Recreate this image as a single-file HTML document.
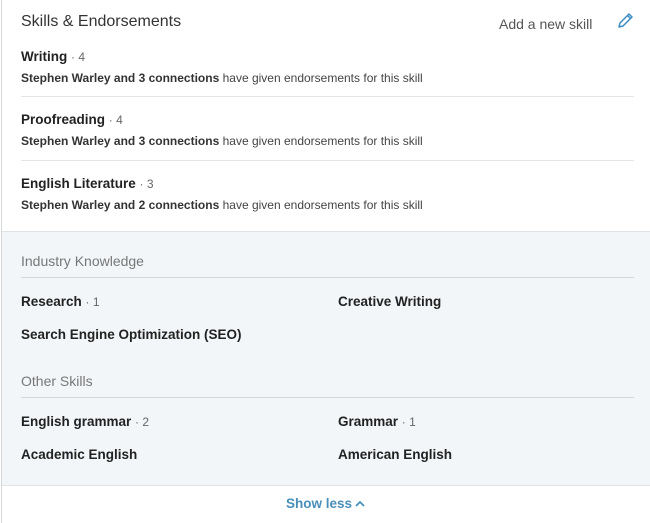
<!DOCTYPE html>
<html><head><style>
body{margin:0;width:650px;height:523px;overflow:hidden;background:#fff;font-family:"Liberation Sans",Arial,sans-serif;color:#222;}
.card{position:absolute;left:1px;top:0;width:649px;height:523px;border-left:1px solid #d6d9dc;background:#fff;}
.a{position:absolute;white-space:nowrap;}
.t{font-size:16px;color:#333;}
.s{font-size:13.5px;font-weight:bold;color:#222;}
.s span{font-weight:normal;color:#666;font-size:12px;}
.e{font-size:12px;color:#444;}
.e b{color:#333;}
.hr{position:absolute;left:19px;width:613px;height:1px;background:#e3e5e7;}
.g{position:absolute;left:0;top:231px;width:649px;height:253px;background:#f3f6f8;border-top:1px solid #dfe3e6;border-bottom:1px solid #dfe3e6;}
.h{font-size:14px;color:#777;}
</style></head><body>
<div class="card">
<div class="a t" style="left:19px;top:13px">Skills &amp; Endorsements</div>
<div class="a" style="left:497px;top:16px;font-size:14px;color:#555">Add a new skill</div>
<svg class="a" style="left:613px;top:11px" width="20" height="20" viewBox="0 0 20 20"><path d="M4 16 L5 12 L14 3 L17 6 L8 15 Z M12.5 4.5 L15.5 7.5" fill="none" stroke="#3a8cc4" stroke-width="1.5" stroke-linejoin="round"/></svg>

<div class="a s" style="left:19px;top:49px">Writing <span>· 4</span></div>
<div class="a e" style="left:19px;top:71px"><b>Stephen Warley and 3 connections</b> have given endorsements for this skill</div>
<div class="hr" style="top:96px"></div>
<div class="a s" style="left:19px;top:112px">Proofreading <span>· 4</span></div>
<div class="a e" style="left:19px;top:134px"><b>Stephen Warley and 3 connections</b> have given endorsements for this skill</div>
<div class="hr" style="top:160px"></div>
<div class="a s" style="left:19px;top:176px">English Literature <span>· 3</span></div>
<div class="a e" style="left:19px;top:198px"><b>Stephen Warley and 2 connections</b> have given endorsements for this skill</div>

<div class="g">
<div class="a h" style="left:19px;top:21px">Industry Knowledge</div>
<div class="hr" style="top:45px;background:#d5d8db"></div>
<div class="a s" style="left:19px;top:62px">Research <span>· 1</span></div>
<div class="a s" style="left:336px;top:62px">Creative Writing</div>
<div class="a s" style="left:19px;top:95px">Search Engine Optimization (SEO)</div>
<div class="a h" style="left:19px;top:141px">Other Skills</div>
<div class="hr" style="top:165px;background:#d5d8db"></div>
<div class="a s" style="left:19px;top:182px">English grammar <span>· 2</span></div>
<div class="a s" style="left:336px;top:182px">Grammar <span>· 1</span></div>
<div class="a s" style="left:19px;top:215px">Academic English</div>
<div class="a s" style="left:336px;top:215px">American English</div>
</div>

<div class="a" style="left:284px;top:496px;font-size:13.5px;font-weight:bold;color:#4a8fba">Show less</div>
<svg class="a" style="left:352px;top:498px" width="12" height="12" viewBox="0 0 12 12"><path d="M2 8 L6 4 L10 8" fill="none" stroke="#4a8fba" stroke-width="1.8"/></svg>
</div>
</body></html>
